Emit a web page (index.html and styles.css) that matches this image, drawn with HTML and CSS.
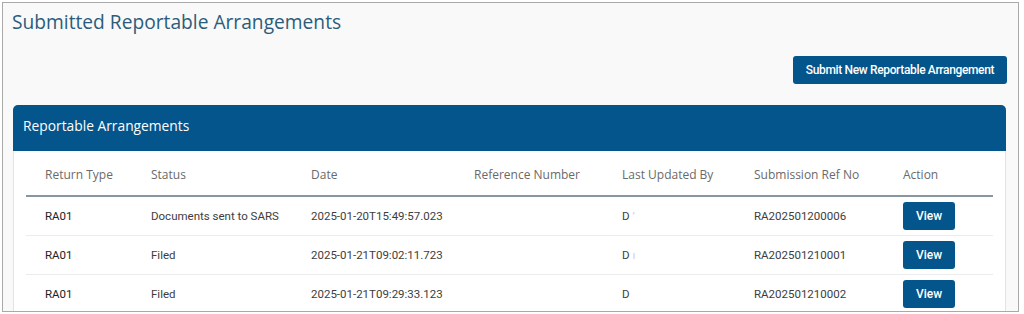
FILE: index.html
```html
<!DOCTYPE html>
<html lang="en">
<head>
<meta charset="utf-8">
<title>Submitted Reportable Arrangements</title>
<link rel="stylesheet" href="styles.css">
</head>
<body>
<div class="frame">
  <h1 class="title">Submitted Reportable Arrangements</h1>
  <div class="actions">
    <button class="btn btn-primary">Submit New Reportable Arrangement</button>
  </div>
  <section class="card">
    <header class="card-header">Reportable Arrangements</header>
    <div class="card-body">
      <table class="grid">
        <colgroup>
          <col class="c1"><col class="c2"><col class="c3"><col class="c4"><col class="c5"><col class="c6"><col class="c7">
        </colgroup>
        <thead>
          <tr>
            <th>Return Type</th><th>Status</th><th>Date</th><th>Reference Number</th><th>Last Updated By</th><th>Submission Ref No</th><th>Action</th>
          </tr>
        </thead>
        <tbody>
          <tr>
            <td class="strong">RA01</td><td>Documents sent to SARS</td><td>2025-01-20T15:49:57.023</td><td></td><td>D <span class="faint">&#x2019;</span></td><td>RA202501200006</td><td><button class="btn btn-view">View</button></td>
          </tr>
          <tr>
            <td class="strong">RA01</td><td>Filed</td><td>2025-01-21T09:02:11.723</td><td></td><td>D <span class="faint">ı</span></td><td>RA202501210001</td><td><button class="btn btn-view">View</button></td>
          </tr>
          <tr>
            <td class="strong">RA01</td><td>Filed</td><td>2025-01-21T09:29:33.123</td><td></td><td>D</td><td>RA202501210002</td><td><button class="btn btn-view">View</button></td>
          </tr>
        </tbody>
      </table>
    </div>
  </section>
</div>
</body>
</html>
```
FILE: styles.css
```css
* { box-sizing: border-box; }
html, body { margin: 0; padding: 0; background: #ffffff; }
body { font-family: "Open Sans", "Noto Sans", sans-serif; }

.frame {
  margin: 2px;
  width: 1017px;
  height: 310px;
  border: 1px solid #a9a9a9;
  background: #f9f9f9;
  overflow: hidden;
  padding: 5px 12px 0 10px;
}

.title {
  margin: 0 0 0 -1px;
  font-size: 19.2px;
  line-height: 27px;
  font-weight: 400;
  color: #2b5d7b;
}

.actions {
  display: flex;
  justify-content: flex-end;
  margin-top: 21px;
  margin-right: -1px;
}

.btn {
  border: 0;
  color: #ffffff;
  background: #03558b;
  font-family: Roboto, "Liberation Sans", sans-serif;
  cursor: pointer;
}

.btn-primary {
  width: 214px;
  height: 28px;
  border-radius: 3px;
  font-size: 12px;
  font-weight: 500;
  letter-spacing: -0.35px;
  padding: 0;
}

.card {
  margin-top: 21px;
  background: #ffffff;
  border-radius: 5px 5px 0 0;
  border: 1px solid #e3e3e3;
  border-top: 0;
}

.card-header {
  height: 46px;
  background: #03558b;
  color: #ffffff;
  font-size: 13.8px;
  line-height: 42px;
  padding-left: 10px;
  border-radius: 5px 5px 0 0;
  margin: 0 -1px;
}

.card-body {
  padding: 0 11px 0 12px;
}

.grid {
  width: 967px;
  border-collapse: collapse;
  table-layout: fixed;
}
.c1 { width: 106px; }
.c2 { width: 160px; }
.c3 { width: 163px; }
.c4 { width: 148px; }
.c5 { width: 132px; }
.c6 { width: 149px; }
.c7 { width: 109px; }

.grid th {
  height: 45px;
  text-align: left;
  font-weight: 400;
  font-size: 12px;
  color: #6a6a6a;
  padding: 3px 0 0 19px;
  border-bottom: 2px solid #8797a1;
  white-space: nowrap;
}

.grid td {
  height: 39px;
  padding: 0 0 0 19px;
  font-family: Roboto, "Liberation Sans", sans-serif;
  font-size: 11.5px;
  color: #3d3d3d;
  border-bottom: 1px solid #ececec;
  white-space: nowrap;
  vertical-align: middle;
}

.grid td.strong { font-weight: 400; color: #222222; }

.faint { color: #d0d0d0; }

.btn-view {
  width: 52px;
  height: 28px;
  border-radius: 3px;
  font-size: 12px;
  font-weight: 500;
  padding: 0;
  display: block;
}
```
